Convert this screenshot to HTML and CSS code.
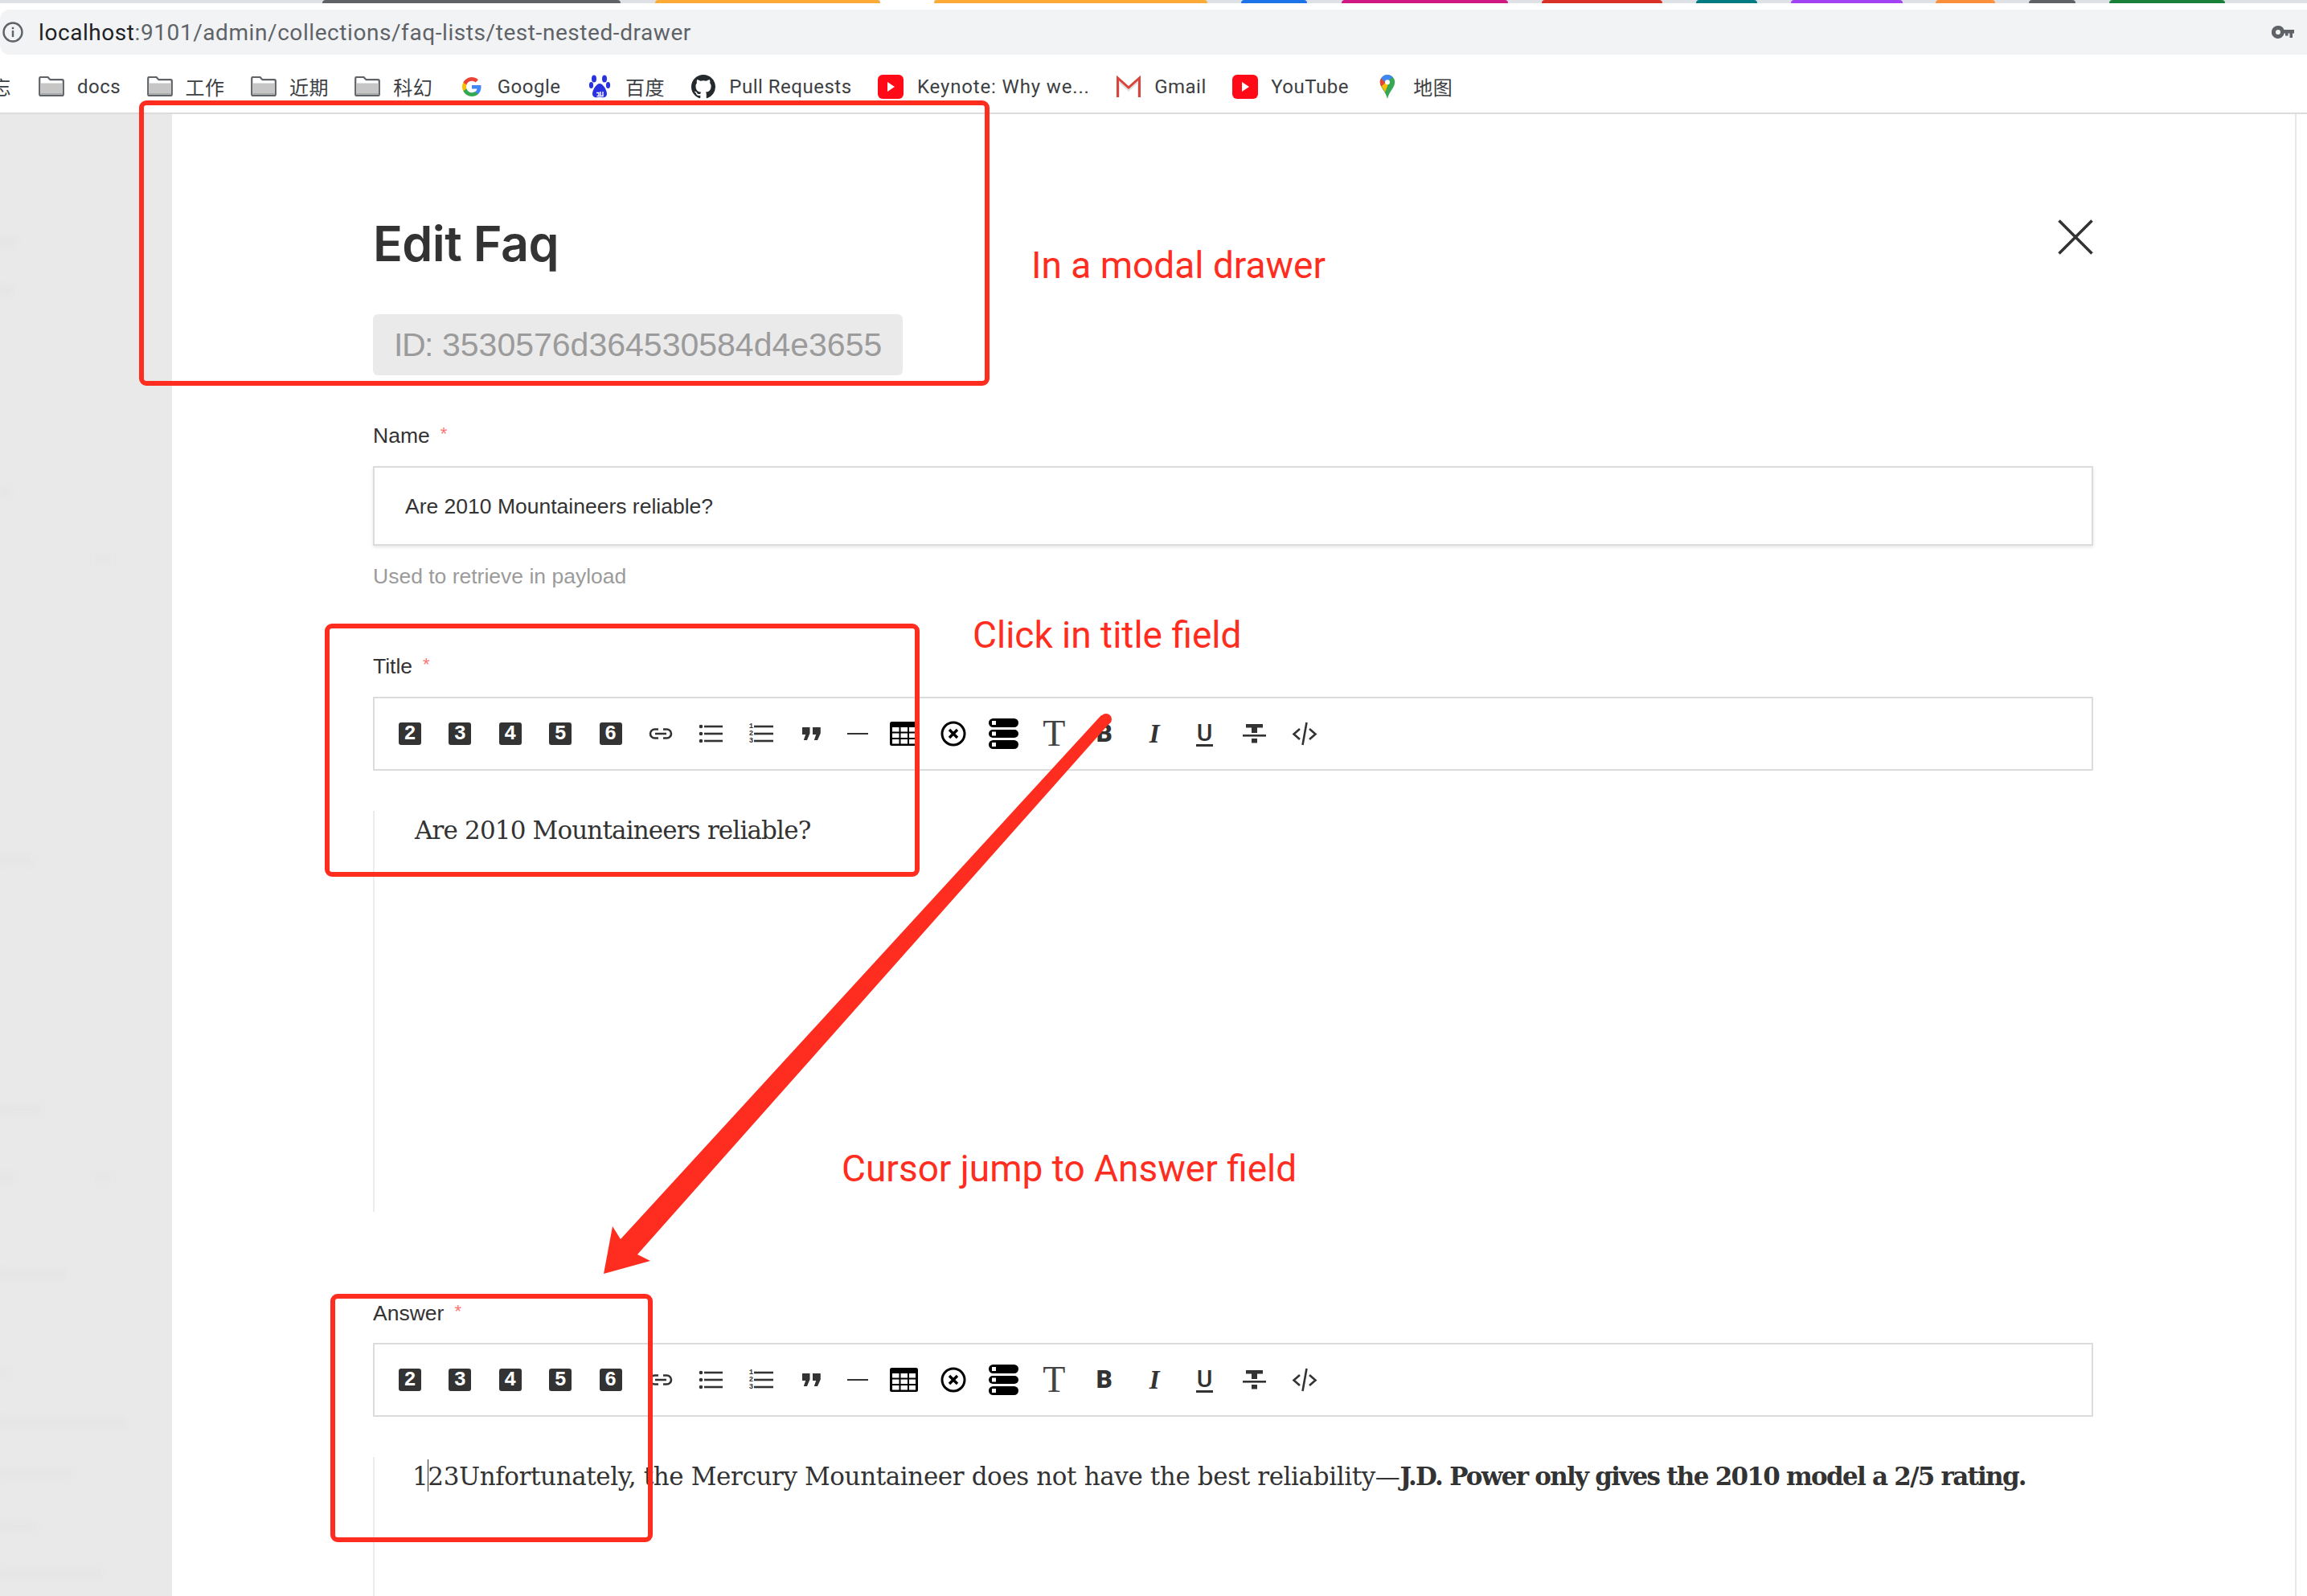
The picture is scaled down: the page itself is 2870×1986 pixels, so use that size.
FILE: index.html
```html
<!DOCTYPE html>
<html lang="en">
<head>
<meta charset="utf-8">
<title>Edit Faq</title>
<link rel="stylesheet" href="styles.css">
</head>
<body>
<svg class="defs" aria-hidden="true">
  <symbol id="folder" viewBox="0 0 32 25"><path d="M1.200 2.500Q1.200 1 2.700 1H11.500L14.500 4.200H29.300Q30.800 4.200 30.800 5.700V22.500Q30.800 24 29.300 24H2.700Q1.200 24 1.200 22.500Z" fill="#fff" stroke="#5f6368" stroke-width="2.200"/><path d="M2.300 8.500H29.700V20.500H2.300Z" fill="#c6c6c6"/><path d="M2.300 20.500H29.700V22.900H2.300Z" fill="#a9a9a9"/></symbol>
  <symbol id="yt" viewBox="0 0 32 30"><rect x="0" y="0" width="32" height="30" rx="6" fill="#ff0a16"/><path d="M12 9L21 15L12 21Z" fill="#fff"/></symbol>
  <symbol id="link" viewBox="0 0 32 16"><path d="M13 2.500H8.500a5.500 5.500 0 0 0 0 11H13M19 2.500H23.500a5.500 5.500 0 0 1 0 11H19M9 8H23" fill="none" stroke="#333" stroke-width="2.600"/></symbol>
  <symbol id="ul" viewBox="0 0 30 24"><g fill="#333"><circle cx="3" cy="3" r="2.300"/><circle cx="3" cy="12" r="2.300"/><circle cx="3" cy="21" r="2.300"/><rect x="7" y="1.700" width="23" height="2.600"/><rect x="7" y="10.700" width="23" height="2.600"/><rect x="7" y="19.700" width="23" height="2.600"/></g></symbol>
  <symbol id="ol-lines" viewBox="0 0 30 26"><g fill="#333"><rect x="6" y="2.700" width="24" height="2.600"/><rect x="6" y="11.700" width="24" height="2.600"/><rect x="6" y="20.700" width="24" height="2.600"/></g></symbol>
  <symbol id="quote" viewBox="0 0 23 16"><path d="M0 0H9.500V7.500L6 16H1.800L4.200 9H0ZM13 0H22.800V7.500L19 16H14.800L17.200 9H13Z" fill="#333"/></symbol>
  <symbol id="table" viewBox="0 0 35 30"><rect width="35" height="30" rx="2.500" fill="#000"/><g fill="#fff"><rect x="3" y="7" width="8.500" height="5.500"/><rect x="13.500" y="7" width="8.500" height="5.500"/><rect x="24" y="7" width="8" height="5.500"/><rect x="3" y="14.500" width="8.500" height="5.500"/><rect x="13.500" y="14.500" width="8.500" height="5.500"/><rect x="24" y="14.500" width="8" height="5.500"/><rect x="3" y="22" width="8.500" height="5.500"/><rect x="13.500" y="22" width="8.500" height="5.500"/><rect x="24" y="22" width="8" height="5.500"/></g></symbol>
  <symbol id="xc" viewBox="0 0 32 32"><circle cx="16" cy="16" r="14" fill="none" stroke="#000" stroke-width="3"/><path d="M11 11L21 21M21 11L11 21" stroke="#000" stroke-width="3.400" fill="none"/></symbol>
  <symbol id="blocks" viewBox="0 0 37 38"><g fill="#000"><rect width="37" height="11" rx="5.500"/><rect y="14" width="37" height="10" rx="5"/><rect y="27" width="37" height="11" rx="5.500"/></g><g fill="#fff"><rect x="4" y="3" width="5" height="5"/><rect x="4" y="16.500" width="5" height="5"/><rect x="4" y="30" width="5" height="5"/></g></symbol>
  <symbol id="strike" viewBox="0 0 29 24"><g fill="#333"><rect x="4" y="0" width="21" height="4.500"/><rect x="11" y="4" width="7" height="7"/><rect x="0" y="13" width="29" height="2.600"/><rect x="11" y="18" width="7" height="5.500"/></g></symbol>
  <symbol id="code" viewBox="0 0 32 30"><path d="M10 9L2.500 15.500L10 22M22 9L29.500 15.500L22 22M18.500 1L13.500 29" fill="none" stroke="#333" stroke-width="2.600"/></symbol>
</svg>

<header class="chrome">
  <div class="tabs">
    <span class="tab t-gray"></span><span class="tab t-orange-a"></span><span class="tab t-white"></span><span class="tab t-orange-b"></span><span class="tab t-blue"></span><span class="tab t-pink"></span><span class="tab t-red"></span><span class="tab t-teal"></span><span class="tab t-purple"></span><span class="tab t-orange-c"></span><span class="tab t-gray-b"></span><span class="tab t-green"></span>
  </div>
  <div class="address">
    <svg class="info" viewBox="0 0 26 26"><circle cx="13" cy="13" r="11.500" fill="none" stroke="#5f6368" stroke-width="2.400"/><rect x="11.800" y="11" width="2.400" height="8" fill="#5f6368"/><rect x="11.800" y="6.800" width="2.400" height="2.500" fill="#5f6368"/></svg>
    <span class="url"><span class="host">localhost</span>:9101/admin/collections/faq-lists/test-nested-drawer</span>
    <svg class="key" viewBox="0 0 28 16"><path fill="#5f6368" fill-rule="evenodd" d="M8 0a8 8 0 0 1 7.500 5H28V9.500H26V15H22.500V9.500H20.500V12.500H17V9.500H15.700A8 8 0 1 1 8 0ZM8 5a3 3 0 1 0 0 6a3 3 0 0 0 0-6Z"/></svg>
  </div>
  <nav class="bookmarks">
    <span class="clipped">备忘</span>
    <a class="bm"><svg class="bm-ico folder"><use href="#folder"/></svg><span>docs</span></a>
    <a class="bm"><svg class="bm-ico folder"><use href="#folder"/></svg><span>工作</span></a>
    <a class="bm"><svg class="bm-ico folder"><use href="#folder"/></svg><span>近期</span></a>
    <a class="bm"><svg class="bm-ico folder"><use href="#folder"/></svg><span>科幻</span></a>
    <a class="bm"><svg class="bm-ico" viewBox="-4 -3 32 30"><path d="M23.500 12.300c0-.8-.1-1.600-.2-2.300H12v4.400h6.500a5.600 5.600 0 0 1-2.400 3.600v3h3.900c2.200-2.100 3.500-5.100 3.500-8.700z" fill="#4285f4"/><path d="M12 24c3.200 0 6-1.100 8-2.900l-3.900-3c-1.100.7-2.500 1.100-4.100 1.100-3.100 0-5.800-2.100-6.700-5H1.300v3.100A12 12 0 0 0 12 24z" fill="#34a853"/><path d="M5.300 14.200a7.200 7.200 0 0 1 0-4.600V6.500H1.300a12 12 0 0 0 0 10.800z" fill="#fbbc05"/><path d="M12 4.800c1.800 0 3.300.6 4.600 1.800L20 3.200A12 12 0 0 0 1.300 6.500l4 3.100c.9-2.800 3.600-4.800 6.700-4.800z" fill="#ea4335"/></svg><span>Google</span></a>
    <a class="bm"><svg class="bm-ico" viewBox="-3 0 32 30"><g fill="#2932e1"><ellipse cx="6" cy="5" rx="3" ry="4.500"/><ellipse cx="19" cy="5" rx="3" ry="4.500"/><ellipse cx="2.500" cy="13" rx="2.600" ry="4"/><ellipse cx="23.500" cy="13" rx="2.600" ry="4"/><path d="M13 11C9 11 4 19 4 23.500C4 28.500 9 29 13 27.500C17 29 22 28.500 22 23.500C22 19 17 11 13 11Z"/></g><path d="M9 22.500h3v4H9.500M14 21v5.500h3V21" fill="none" stroke="#fff" stroke-width="1.400"/></svg><span>百度</span></a>
    <a class="bm"><svg class="bm-ico" viewBox="0 0 16 16"><path fill="#24292e" d="M8 0C3.580 0 0 3.580 0 8c0 3.540 2.290 6.530 5.470 7.590.4.070.55-.17.55-.38 0-.19-.01-.82-.01-1.490-2.010.37-2.530-.49-2.690-.94-.09-.23-.48-.94-.82-1.130-.28-.15-.68-.52-.01-.53.630-.01 1.080.58 1.230.82.720 1.210 1.870.87 2.330.66.070-.52.280-.87.510-1.070-1.780-.2-3.640-.89-3.640-3.950 0-.87.310-1.590.82-2.150-.08-.2-.36-1.020.08-2.120 0 0 .67-.21 2.200.82.640-.18 1.320-.27 2-.27s1.360.09 2 .27c1.530-1.040 2.200-.82 2.200-.82.440 1.100.160 1.920.080 2.120.510.560.820 1.270.820 2.150 0 3.070-1.870 3.750-3.650 3.950.29.250.54.730.54 1.480 0 1.070-.01 1.930-.01 2.200 0 .21.150.46.550.38A8.010 8.010 0 0 0 16 8c0-4.420-3.580-8-8-8z"/></svg><span>Pull Requests</span></a>
    <a class="bm"><svg class="bm-ico"><use href="#yt"/></svg><span class="bm-wide">Keynote: Why we...</span></a>
    <a class="bm"><svg class="bm-ico" viewBox="-1 0 32 28"><path d="M0 27V2H3L15 13L27 2H30V27H26V10L15 20L4 10V27Z" fill="#e2e2e2"/><path d="M1.500 27V3L15 15L28.500 3V27" fill="none" stroke="#d9453a" stroke-width="3"/></svg><span>Gmail</span></a>
    <a class="bm"><svg class="bm-ico"><use href="#yt"/></svg><span>YouTube</span></a>
    <a class="bm"><svg class="bm-ico" viewBox="-5 0 32 36"><path d="M11 0C5 0 0 5 0 11C0 19 8 24 11 36C14 24 22 19 22 11C22 5 17 0 11 0Z" fill="#34a853"/><path d="M11 0C7 0 3.500 2 1.600 5.500L8 11L19 4C17 1.500 14 0 11 0Z" fill="#4285f4"/><path d="M1.600 5.500C.5 7 0 9 0 11C0 13.500 1 16 2 17.500L8 12Z" fill="#ea4335"/><path d="M2 17.500C3.800 20.500 6 23 7.500 26L14 9L8 12Z" fill="#fbbc05"/><circle cx="11" cy="11" r="3.600" fill="#fff"/></svg><span>地图</span></a>
  </nav>
</header>

<main class="screen">
  <aside class="side"></aside>
  <section class="drawer">
    <div class="head">
      <div>
        <h1 class="title">Edit Faq</h1>
        <div class="id-pill"><span class="id-label">ID:</span>3530576d364530584d4e3655</div>
      </div>
      <svg class="close" viewBox="0 0 44 44"><path d="M1.500 1.500L42.500 42.500M42.500 1.500L1.500 42.500" stroke="#333" stroke-width="3.600" fill="none"/></svg>
    </div>

    <div class="field field-name">
      <label class="lbl">Name<i class="req">*</i></label>
      <div class="input">Are 2010 Mountaineers reliable?</div>
      <p class="hint">Used to retrieve in payload</p>
    </div>

    <div class="field field-title">
      <label class="lbl">Title<i class="req">*</i></label>
      <div class="toolbar">
        <span class="tb"><b class="hi">2</b></span><span class="tb"><b class="hi">3</b></span><span class="tb"><b class="hi">4</b></span><span class="tb"><b class="hi">5</b></span><span class="tb"><b class="hi">6</b></span>
        <span class="tb"><svg class="i-link"><use href="#link"/></svg></span>
        <span class="tb"><svg class="i-ul"><use href="#ul"/></svg></span>
        <span class="tb"><span class="ol"><span class="ol-nums"><span>1</span><span>2</span><span>3</span></span><svg class="i-ol"><use href="#ol-lines"/></svg></span></span>
        <span class="tb"><svg class="i-quote"><use href="#quote"/></svg></span>
        <span class="tb tb-hr"><span class="hr"></span></span>
        <span class="tb"><svg class="i-table"><use href="#table"/></svg></span>
        <span class="tb"><svg class="i-xc"><use href="#xc"/></svg></span>
        <span class="tb"><svg class="i-blocks"><use href="#blocks"/></svg></span>
        <span class="tb"><span class="g-t">T</span></span>
        <span class="tb"><span class="g-b">B</span></span>
        <span class="tb"><span class="g-i">I</span></span>
        <span class="tb"><span class="g-u">U</span></span>
        <span class="tb"><svg class="i-strike"><use href="#strike"/></svg></span>
        <span class="tb"><svg class="i-code"><use href="#code"/></svg></span>
      </div>
      <div class="editor editor-title"><p class="rt">Are 2010 Mountaineers reliable?</p></div>
    </div>

    <div class="field field-answer">
      <label class="lbl">Answer<i class="req">*</i></label>
      <div class="toolbar">
        <span class="tb"><b class="hi">2</b></span><span class="tb"><b class="hi">3</b></span><span class="tb"><b class="hi">4</b></span><span class="tb"><b class="hi">5</b></span><span class="tb"><b class="hi">6</b></span>
        <span class="tb"><svg class="i-link"><use href="#link"/></svg></span>
        <span class="tb"><svg class="i-ul"><use href="#ul"/></svg></span>
        <span class="tb"><span class="ol"><span class="ol-nums"><span>1</span><span>2</span><span>3</span></span><svg class="i-ol"><use href="#ol-lines"/></svg></span></span>
        <span class="tb"><svg class="i-quote"><use href="#quote"/></svg></span>
        <span class="tb tb-hr"><span class="hr"></span></span>
        <span class="tb"><svg class="i-table"><use href="#table"/></svg></span>
        <span class="tb"><svg class="i-xc"><use href="#xc"/></svg></span>
        <span class="tb"><svg class="i-blocks"><use href="#blocks"/></svg></span>
        <span class="tb"><span class="g-t">T</span></span>
        <span class="tb"><span class="g-b">B</span></span>
        <span class="tb"><span class="g-i">I</span></span>
        <span class="tb"><span class="g-u">U</span></span>
        <span class="tb"><svg class="i-strike"><use href="#strike"/></svg></span>
        <span class="tb"><svg class="i-code"><use href="#code"/></svg></span>
      </div>
      <div class="editor editor-answer"><p class="rt rt-answer">1<span class="caret"></span>23Unfortunately, the Mercury Mountaineer does not have the best reliability—<strong>J.D. Power only gives the 2010 model a 2/5 rating.</strong></p></div>
    </div>
  </section>
</main>

<div class="marks">
  <span class="box box-head"></span>
  <span class="box box-title"></span>
  <span class="box box-answer"></span>
  <span class="note note-a">In a modal drawer</span>
  <span class="note note-b">Click in title field</span>
  <span class="note note-c">Cursor jump to Answer field</span>
  <svg class="arrow" viewBox="0 0 2870 1986"><circle cx="1376" cy="895" r="7" fill="#ff2d20"/><polygon points="1370,890 1382,898 793,1561 809,1569 751,1585 762,1526 772,1542" fill="#ff2d20"/></svg>
</div>
</body>
</html>
```
FILE: styles.css
```css
* { box-sizing: border-box; }
html, body { margin: 0; padding: 0; }
body {
  position: relative;
  width: 2870px;
  height: 1986px;
  overflow: hidden;
  background: #fff;
  color: #333;
  font-family: "Liberation Sans", Arial, sans-serif;
}
.defs { position: absolute; width: 0; height: 0; }

/* browser chrome */
.chrome { height: 142px; border-bottom: 2px solid #dcdcdc; }
.tabs { display: flex; height: 4px; margin-bottom: 8px; background: #dee1e6; }
.tab { height: 4px; border-radius: 5px 5px 0 0; }
.t-gray { margin-left: 401px; width: 371px; background: #5f6368; }
.t-orange-a { margin-left: 43px; width: 280px; background: #fbab35; }
.t-white { width: 67px; background: #fff; border-radius: 0; }
.t-orange-b { width: 340px; background: #fbab35; }
.t-blue { margin-left: 42px; width: 82px; background: #1a73e8; }
.t-pink { margin-left: 43px; width: 207px; background: #d01884; }
.t-red { margin-left: 42px; width: 150px; background: #d93025; }
.t-teal { margin-left: 42px; width: 76px; background: #007b83; }
.t-purple { margin-left: 42px; width: 139px; background: #a142f4; }
.t-orange-c { margin-left: 41px; width: 74px; background: #fa903e; }
.t-gray-b { margin-left: 42px; width: 58px; background: #5f6368; }
.t-green { margin-left: 42px; width: 144px; background: #188038; }

.address {
  display: flex;
  align-items: center;
  height: 56px;
  padding: 0 16px 0 3px;
  background: #f1f3f4;
  border-radius: 12px 0 0 12px;
  font-family: Roboto, sans-serif;
  font-size: 28px;
  letter-spacing: .57px;
  color: #5f6368;
}
.info { width: 26px; height: 26px; margin-right: 19px; }
.url { flex: 1; }
.host { color: #202124; }
.key { width: 28px; height: 16px; }

.bookmarks {
  display: flex;
  align-items: center;
  height: 72px;
  padding-top: 7px;
  font-family: Roboto, "Noto Sans CJK SC", sans-serif;
  font-size: 24px;
  letter-spacing: .5px;
  color: #3c4043;
}
.clipped {
  width: 14px;
  margin-right: 34px;
  overflow: hidden;
  direction: rtl;
  white-space: nowrap;
}
.bm { display: flex; align-items: center; gap: 16px; margin-right: 32.400px; white-space: nowrap; }
.bm-wide { letter-spacing: .85px; margin-left: 1px; }
.bm-ico { width: 32px; height: 30px; flex: none; }
.bm-ico.folder { height: 25px; }

/* page */
.screen { display: flex; height: 1844px; padding-right: 13px; }
.side {
  position: relative;
  flex: none;
  width: 214px;
  background: #e9e9e9;
  overflow: hidden;
}
.side::before {
  content: "";
  position: absolute;
  inset: -142px 0 0 0;
  filter: blur(4px);
  background-repeat: no-repeat;
  background-image:
    linear-gradient(#e4e4e4, #e4e4e4), linear-gradient(#e4e4e4, #e4e4e4),
    linear-gradient(#e4e4e4, #e4e4e4), linear-gradient(#e4e4e4, #e4e4e4),
    linear-gradient(#e4e4e4, #e4e4e4), linear-gradient(#e4e4e4, #e4e4e4),
    linear-gradient(#e4e4e4, #e4e4e4), linear-gradient(#e4e4e4, #e4e4e4),
    linear-gradient(#e4e4e4, #e4e4e4), linear-gradient(#e4e4e4, #e4e4e4),
    linear-gradient(#e4e4e4, #e4e4e4), linear-gradient(#e4e4e4, #e4e4e4),
    linear-gradient(#e4e4e4, #e4e4e4), linear-gradient(#e4e4e4, #e4e4e4);
  background-size:
    20px 8px, 18px 8px, 12px 8px, 38px 8px, 50px 8px, 15px 8px,
    82px 8px, 10px 8px, 155px 8px, 88px 8px, 45px 8px, 125px 8px, 20px 6px, 20px 6px;
  background-position:
    0 297px, 0 357px, 0 608px, 0 1067px, 0 1377px, 0 1461px,
    0 1581px, 0 1706px, 0 1765px, 0 1830px, 0 1895px, 0 1954px, 118px 693px, 118px 1462px;
}
.drawer {
  flex: 1;
  padding: 0 251px 0 250px;
  border-right: 2px solid #e8e8e8;
  min-width: 0;
}
.head { display: flex; justify-content: space-between; align-items: flex-start; height: 325px; padding-top: 125px; }
.title { margin: 0 0 52px; font-family: Inter, sans-serif; font-size: 61px; line-height: 72px; font-weight: 600; letter-spacing: -.6px; }
.id-pill {
  display: flex;
  align-items: center;
  height: 76px;
  width: 659px;
  padding-left: 26px;
  border-radius: 6px;
  background: #eaeaea;
  color: #9b9b9b;
  font-size: 41px;
}
.id-label { width: 49px; margin-right: 11px; letter-spacing: -1.500px; }
.close { width: 44px; height: 44px; margin-top: 6px; flex: none; }

.lbl { display: block; height: 53px; font-size: 26.500px; line-height: 30px; }
.req { margin-left: 13px; font-style: normal; color: #ff7373; font-size: 22px; position: relative; top: -4px; }
.field-name { padding-top: 60px; }
.input {
  display: flex;
  align-items: center;
  height: 99px;
  padding: 2px 0 0 38px;
  border: 2px solid #dcdcdc;
  box-shadow: 0 2px 4px rgba(0, 0, 0, .1);
  font-size: 26.500px;
}
.hint { margin: 23px 0 0; font-size: 26.500px; line-height: 30px; color: #9b9b9b; }
.field-title { padding-top: 82px; }
.toolbar {
  display: flex;
  align-items: center;
  height: 92px;
  padding-left: 12.800px;
  border: 2px solid #dcdcdc;
}
.tb { display: flex; align-items: center; justify-content: center; flex: none; width: 62.400px; height: 60px; }
.tb-hr { width: 52.600px; }
.hi {
  display: flex;
  align-items: center;
  justify-content: center;
  width: 28px;
  height: 28px;
  border-radius: 3px;
  background: #333;
  color: #fff;
  font-family: "Liberation Mono", monospace;
  font-size: 25px;
  font-weight: 700;
}
.hr { width: 26px; height: 2px; background: #333; }
.i-link { width: 32px; height: 16px; }
.i-ul { width: 30px; height: 24px; }
.ol { position: relative; display: flex; }
.i-ol { width: 30px; height: 26px; }
.ol-nums {
  position: absolute;
  left: 0;
  top: 0;
  display: flex;
  flex-direction: column;
  font-family: "Liberation Mono", monospace;
  font-size: 9px;
  line-height: 9px;
  font-weight: 700;
}
.i-quote { width: 23px; height: 16px; }
.i-table { width: 35px; height: 30px; }
.i-xc { width: 32px; height: 32px; }
.i-blocks { width: 37px; height: 38px; }
.i-strike { width: 29px; height: 24px; }
.i-code { width: 32px; height: 30px; }
.g-t { font-family: "Liberation Serif", serif; font-size: 46px; line-height: 46px; color: #444; }
.g-b { font-family: Roboto, sans-serif; font-weight: 900; font-size: 31px; line-height: 32px; color: #333; }
.g-i { font-family: "Liberation Serif", serif; font-weight: 700; font-style: italic; font-size: 33px; line-height: 32px; color: #333; }
.g-u { font-family: Roboto, sans-serif; font-size: 30px; line-height: 28px; font-weight: 500; color: #333; border-bottom: 3px solid #333; padding: 0 1px; }

.editor { border-left: 2px solid #ececec; padding-left: 50px; margin-top: 50px; }
.editor-title { height: 499px; }
.field-answer { padding-top: 111px; }
.field-answer .lbl { height: 52px; }
.editor-answer { height: 173px; }
.rt { margin: 0; font-family: "DejaVu Serif", serif; font-size: 31px; letter-spacing: -.85px; line-height: 48px; color: #333; white-space: nowrap; }
.rt-answer { margin-left: -3px; letter-spacing: -.4px; }
.rt-answer strong { letter-spacing: -1.750px; }
.caret { display: inline-block; width: 1.500px; height: 40px; margin: 0 -0.750px; vertical-align: -8px; background: #333; }

/* annotations drawn over the screenshot */
.marks { position: absolute; inset: 0; pointer-events: none; }
.box { position: absolute; border: 6px solid #ff2d20; border-radius: 9px; }
.box-head { left: 173px; top: 125px; width: 1058px; height: 355px; }
.box-title { left: 404px; top: 776px; width: 740px; height: 315px; }
.box-answer { left: 411px; top: 1610px; width: 401px; height: 309px; }
.note { position: absolute; color: #ff2d20; font-family: Roboto, sans-serif; font-size: 46px; line-height: 56px; white-space: nowrap; }
.note-a { left: 1283px; top: 302px; }
.note-b { left: 1210px; top: 762px; }
.note-c { left: 1047px; top: 1426px; }
.arrow { position: absolute; left: 0; top: 0; width: 2870px; height: 1986px; }
```
